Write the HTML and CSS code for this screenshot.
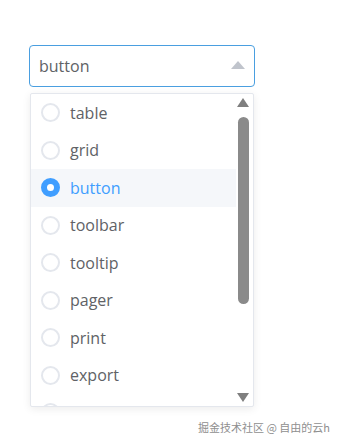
FILE: index.html
```html
<!DOCTYPE html>
<html>
<head>
<meta charset="utf-8">
<link rel="stylesheet" href="styles.css">
</head>
<body>
<div class="page">
  <div class="select">
    <span class="value">button</span>
    <span class="caret"></span>
  </div>
  <div class="dropdown">
    <div class="list">
      <div class="item"><span class="radio"></span><span>table</span></div>
      <div class="item"><span class="radio"></span><span>grid</span></div>
      <div class="item active"><span class="radio on"></span><span>button</span></div>
      <div class="item"><span class="radio"></span><span>toolbar</span></div>
      <div class="item"><span class="radio"></span><span>tooltip</span></div>
      <div class="item"><span class="radio"></span><span>pager</span></div>
      <div class="item"><span class="radio"></span><span>print</span></div>
      <div class="item"><span class="radio"></span><span>export</span></div>
      <div class="item"><span class="radio"></span></div>
    </div>
    <div class="scrollbar">
      <span class="arrow up"></span>
      <span class="thumb"></span>
      <span class="spacer"></span>
      <span class="arrow down"></span>
    </div>
  </div>
</div>
<div class="watermark">掘金技术社区 @ 自由的云h</div>
</body>
</html>
```

FILE: styles.css
```css
html, body {
  margin: 0;
  padding: 0;
  background: #ffffff;
}
body {
  width: 338px;
  height: 446px;
  position: relative;
  overflow: hidden;
  font-family: "Open Sans", "Noto Sans", sans-serif;
}
.page {
  padding: 45px 0 0 29px;
}
.select {
  box-sizing: border-box;
  width: 226px;
  height: 42px;
  border: 1px solid #4a9fe0;
  border-radius: 4px;
  display: flex;
  align-items: center;
  justify-content: space-between;
  padding: 0 9px 0 9px;
}
.value {
  font-size: 16px;
  color: #606266;
}
.caret {
  width: 0;
  height: 0;
  border-left: 7px solid transparent;
  border-right: 7px solid transparent;
  border-bottom: 8px solid #c0c4cc;
  margin-top: -2px;
}
.dropdown {
  box-sizing: border-box;
  margin: 6px 0 0 1px;
  width: 224px;
  height: 314px;
  border: 1px solid #e4e7ed;
  border-radius: 2px;
  box-shadow: 0 2px 8px rgba(0, 0, 0, 0.08);
  display: flex;
  overflow: hidden;
  background: #fff;
}
.list {
  flex: 1;
  padding-top: 0;
  overflow: hidden;
}
.item {
  height: 37.5px;
  display: flex;
  align-items: center;
  padding-left: 10px;
  gap: 10px;
  font-size: 16px;
  color: #606266;
}
.item.active {
  background: #f5f7fa;
  color: #409eff;
}
.radio {
  box-sizing: border-box;
  width: 19px;
  height: 19px;
  border: 2px solid #e4e7ed;
  border-radius: 50%;
  flex: none;
}
.radio.on {
  border: 6px solid #409eff;
  background: #ffffff;
}
.scrollbar {
  width: 17px;
  flex: none;
  display: flex;
  flex-direction: column;
  align-items: center;
  padding: 4px 0 4px 0;
  box-sizing: border-box;
  gap: 0;
}
.arrow {
  width: 0;
  height: 0;
  border-left: 6px solid transparent;
  border-right: 6px solid transparent;
}
.arrow.up {
  border-bottom: 9px solid #7f7f7f;
  margin-right: 3px;
}
.arrow.down {
  border-top: 9px solid #7f7f7f;
  margin-right: 3px;
}
.thumb {
  width: 11px;
  height: 187px;
  margin-top: 10px;
  margin-right: 3px;
  background: #8a8a8a;
  border-radius: 6px;
}
.spacer {
  flex: 1;
}
.watermark {
  position: absolute;
  right: 8px;
  bottom: 11px;
  font-family: "Noto Sans CJK SC", "Noto Sans", sans-serif;
  font-size: 11px;
  color: #8f8f8f;
  text-shadow: 0 0 2px #fff;
  letter-spacing: 0;
}
```
